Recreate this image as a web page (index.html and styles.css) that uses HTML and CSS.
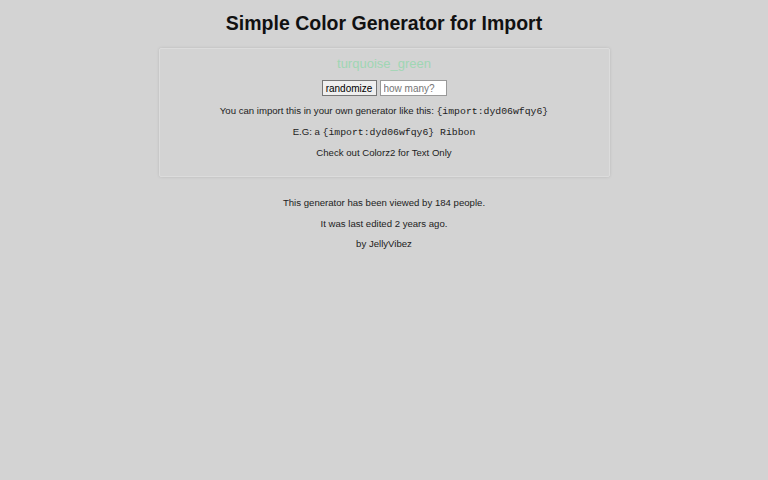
FILE: index.html
```html
<!DOCTYPE html>
<html lang="en">

<head>
    <meta charset="UTF-8">
    <meta name="viewport" content="width=device-width, initial-scale=1.0">
    <title>Simple Color Generator for Import</title>
    <link rel="stylesheet" href="styles.css">
</head>

<body>
    <h1 class="page-title">Simple Color Generator for Import</h1>

    <div class="generator">
        <div class="output" id="output">turquoise_green</div>
        <div class="controls">
            <button class="btn" id="randomize">randomize</button><input class="count" type="text" placeholder="how many?">
        </div>
        <p>You can import this in your own generator like this: <code>{import:dyd06wfqy6}</code></p>
        <p>E.G: a <code>{import:dyd06wfqy6} Ribbon</code></p>
        <p>Check out Colorz2 for Text Only</p>
    </div>

    <div class="meta">
        <p>This generator has been viewed by 184 people.</p>
        <p>It was last edited 2 years ago.</p>
        <p>by JellyVibez</p>
    </div>
</body>

</html>
```

FILE: styles.css
```css
body {
    font-family: "Liberation Sans", Arial, sans-serif;
    background-color: #d3d3d3;
    color: #222;
    margin: 8px;
    text-align: center;
}

.page-title {
    font-size: 19.5px;
    line-height: 24px;
    font-weight: bold;
    color: #111;
    margin: 3px 0 13px;
}

.generator {
    box-sizing: border-box;
    width: 451px;
    margin: 0 auto;
    padding: 5px 0 13px;
    border: 1px solid #dcdcdc;
    box-shadow: 0 0 3px rgba(0, 0, 0, 0.12);
    border-radius: 2px;
}

.output {
    font-size: 13px;
    color: #a0d6b4;
    line-height: 20px;
}

.controls {
    display: flex;
    justify-content: center;
    gap: 3px;
    height: 16px;
    margin: 6px 0 4px;
}

.btn {
    font-family: "Liberation Sans", Arial, sans-serif;
    font-size: 10px;
    width: 55px;
    height: 16px;
    padding: 0;
    background: #efefef;
    border: 1px solid #767676;
    color: #000;
}

.count {
    box-sizing: border-box;
    font-family: "Liberation Sans", Arial, sans-serif;
    font-size: 10px;
    width: 67px;
    height: 16px;
    padding: 0 3px;
    border: 1px solid #999;
    background: #fff;
}

.generator p,
.meta p {
    font-size: 9.6px;
    margin: 0;
    height: 21px;
    line-height: 21px;
}

code {
    font-family: "Liberation Mono", "Courier New", monospace;
    font-size: 9.8px;
    line-height: 1;
    color: #222;
}

.meta {
    margin-top: 16px;
}

.meta p {
    height: 20.5px;
    line-height: 20.5px;
}
```
